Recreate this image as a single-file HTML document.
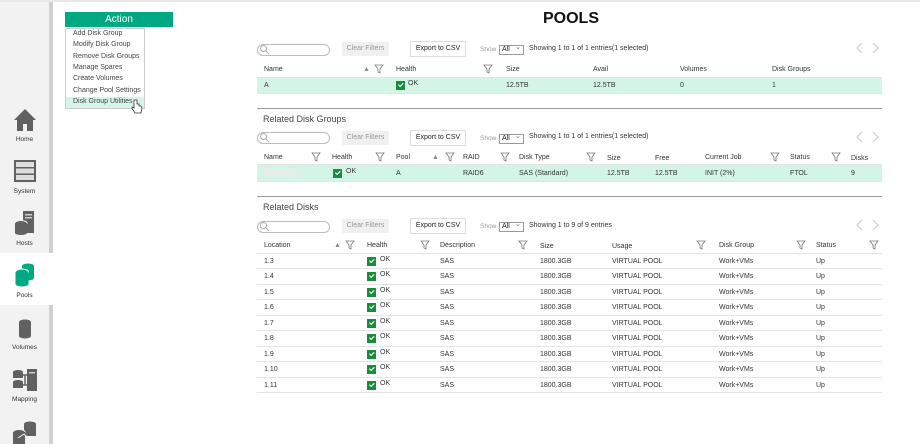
<!DOCTYPE html>
<html><head><meta charset="utf-8"><style>
*{margin:0;padding:0;box-sizing:border-box}
body{width:920px;height:444px;overflow:hidden;background:#fff;font-family:"Liberation Sans",sans-serif;color:#333;position:relative}
.a{position:absolute;white-space:nowrap}
.t{font-size:7px;line-height:8px}
.side{position:absolute;left:0;top:2px;width:49px;height:442px;background:#f2f2f2}
.bar{position:absolute;left:49px;top:2px;width:4px;height:442px;background:#d0d0d0}
.lbl{position:absolute;width:49px;text-align:center;font-size:6.5px;color:#333}
.mi{position:absolute;left:73px;font-size:7px;color:#444}
.sb{position:absolute;left:257px;width:73px;height:12px;border:1px solid #bbb;border-radius:6px}
.cf{position:absolute;left:342px;width:47px;height:14px;background:#f0f0f0;color:#999;font-size:7px;line-height:14px;text-align:center}
.ex{position:absolute;left:410px;width:56px;height:16px;border:1px solid #ddd;font-size:7px;line-height:14px;text-align:center;color:#222}
.sh{position:absolute;left:480px;font-size:6.5px;color:#999}
.sel{position:absolute;left:499px;width:25px;height:10px;border:1px solid #999;font-size:7px;line-height:8px;padding-left:2px;color:#222}
.sel:after{content:"⌄";position:absolute;right:2px;top:-2px;font-size:7px;color:#666}
.hr{position:absolute;left:257px;width:625px;height:1px;background:#e4e4e4}
.row{position:absolute;left:257px;width:625px;height:15px;background:#d3f5e6}
.sep{position:absolute;left:257px;width:625px;height:1px;background:#999}
.ok{position:absolute;width:9px;height:9px;background:#1b8c3c}
.ok:after{content:"";position:absolute;left:2px;top:1px;width:4px;height:2px;border-left:1.5px solid #fff;border-bottom:1.5px solid #fff;transform:rotate(-45deg);transform-origin:left top;top:4px}
.h2{position:absolute;left:263px;font-size:9px;color:#444}
</style></head><body>
<div class="a" style="left:0;top:0;width:920px;height:2px;background:#e8e8e8"></div>
<div class="side"></div><div class="bar"></div>
<div class="a" style="left:0;top:253px;width:53px;height:52px;background:#fff"></div>
<svg class="a" style="left:13px;top:108px" width="24" height="24" viewBox="0 0 24 24"><path d="M12 1L1 12h3v11h6v-7h4v7h6V12h3z" fill="#616161"/></svg>
<div class="lbl" style="top:136px">Home</div>
<svg class="a" style="left:13px;top:159px" width="24" height="24" viewBox="0 0 24 24"><rect x="1" y="1" width="22" height="22" fill="#616161"/><rect x="3" y="3" width="18" height="5" fill="#ddd"/><rect x="3" y="9.5" width="18" height="5" fill="#ddd"/><rect x="3" y="16" width="18" height="5" fill="#ddd"/></svg>
<div class="lbl" style="top:188px">System</div>
<svg class="a" style="left:15px;top:211px" width="20" height="24" viewBox="0 0 20 24"><rect x="8" y="0" width="11" height="22" fill="#616161"/><rect x="10" y="3" width="7" height="1.5" fill="#ccc"/><rect x="10" y="6" width="7" height="1.5" fill="#ccc"/><ellipse cx="6" cy="12" rx="6" ry="2.5" fill="#616161" stroke="#f2f2f2"/><rect x="0" y="12" width="12" height="10" fill="#616161"/><ellipse cx="6" cy="22" rx="6" ry="2" fill="#616161"/></svg>
<div class="lbl" style="top:240px">Hosts</div>
<svg class="a" style="left:15px;top:263px" width="20" height="24" viewBox="0 0 20 24"><ellipse cx="13" cy="3" rx="6" ry="2.5" fill="#01a982"/><rect x="7" y="3" width="12" height="12" fill="#01a982"/><ellipse cx="13" cy="15" rx="6" ry="2.5" fill="#01a982"/><ellipse cx="7" cy="9" rx="6.5" ry="3" fill="#01a982" stroke="#fff"/><rect x="0.5" y="9" width="13" height="12" fill="#01a982"/><ellipse cx="7" cy="21" rx="6.5" ry="2.5" fill="#01a982"/></svg>
<div class="lbl" style="top:292px">Pools</div>
<svg class="a" style="left:18px;top:319px" width="14" height="20" viewBox="0 0 14 20"><ellipse cx="7" cy="3" rx="6" ry="2.5" fill="#616161"/><rect x="1" y="3" width="12" height="14" fill="#616161"/><ellipse cx="7" cy="17" rx="6" ry="2.5" fill="#616161"/></svg>
<div class="lbl" style="top:344px">Volumes</div>
<svg class="a" style="left:12px;top:368px" width="26" height="24" viewBox="0 0 26 24"><ellipse cx="6" cy="4" rx="5" ry="2" fill="#616161"/><rect x="1" y="4" width="10" height="6" fill="#616161"/><ellipse cx="6" cy="14" rx="5" ry="2" fill="#616161"/><rect x="1" y="14" width="10" height="6" fill="#616161"/><path d="M11 7h4M11 17h4M13 7v10" stroke="#616161" stroke-width="1.5"/><rect x="15" y="1" width="10" height="22" fill="#616161"/><rect x="17" y="4" width="6" height="1.5" fill="#ccc"/></svg>
<div class="lbl" style="top:396px">Mapping</div>
<svg class="a" style="left:12px;top:420px" width="26" height="24" viewBox="0 0 26 24"><ellipse cx="18" cy="4" rx="6" ry="2.5" fill="#616161"/><rect x="12" y="4" width="12" height="12" fill="#616161"/><ellipse cx="7" cy="12" rx="6" ry="2.5" fill="#616161" stroke="#f2f2f2"/><rect x="1" y="12" width="12" height="12" fill="#616161"/><path d="M6 18l6-4 4 4" stroke="#f2f2f2" fill="none"/></svg>
<div class="a" style="left:65px;top:12px;width:108px;height:15px;background:#01a982;color:#fff;font-size:10px;line-height:15px;text-align:center">Action</div>
<div class="a" style="left:65px;top:28px;width:80px;height:81px;border:1px solid #ccc;background:#fff"></div>
<div class="a" style="left:66px;top:97px;width:78px;height:11px;background:#d4f5ea"></div>
<div class="mi" style="top:30px">Add Disk Group</div>
<div class="mi" style="top:41px">Modify Disk Group</div>
<div class="mi" style="top:53px">Remove Disk Groups</div>
<div class="mi" style="top:64px">Manage Spares</div>
<div class="mi" style="top:75px">Create Volumes</div>
<div class="mi" style="top:87px">Change Pool Settings</div>
<div class="mi" style="top:98px">Disk Group Utilities</div>
<svg class="a" style="left:131px;top:99px" width="12" height="15" viewBox="0 0 12 15"><path d="M3 1v8L1.5 8 1 9.5 4 14h6l1-5-1-2-2 0V5L6 5V1z" fill="#fff" stroke="#333" stroke-width=".8"/></svg>
<div class="a" style="left:521px;top:10px;width:100px;text-align:center;font-size:16px;font-weight:bold;color:#111">POOLS</div>

<div class="sb" style="top:44px"></div>
<div class="cf" style="top:42px">Clear Filters</div>
<div class="ex" style="top:41px">Export to CSV</div>
<div class="sh" style="top:46px">Show</div><div class="sel" style="top:45px">All</div>
<div class="a t" style="left:529px;top:45px">Showing 1 to 1 of 1 entries(1 selected)</div>
<div class="a t" style="left:264px;top:66px">Name</div>
<div class="a t" style="left:363px;top:66px;color:#888">&#9650;</div>
<div class="a t" style="left:396px;top:66px">Health</div>
<div class="a t" style="left:506px;top:66px">Size</div>
<div class="a t" style="left:593px;top:66px">Avail</div>
<div class="a t" style="left:680px;top:66px">Volumes</div>
<div class="a t" style="left:772px;top:66px">Disk Groups</div>
<div class="hr" style="top:77px"></div>
<div class="row" style="top:78px"></div>
<div class="a t" style="left:264px;top:82px">A</div>
<div class="ok" style="left:396px;top:81px"></div><div class="a t" style="left:408px;top:80px">OK</div>
<div class="a t" style="left:506px;top:82px">12.5TB</div>
<div class="a t" style="left:593px;top:82px">12.5TB</div>
<div class="a t" style="left:680px;top:82px">0</div>
<div class="a t" style="left:772px;top:82px">1</div>
<div class="hr" style="top:93px"></div>
<div class="sep" style="top:108px"></div>

<div class="h2" style="top:114px">Related Disk Groups</div>
<div class="sb" style="top:132px"></div>
<div class="cf" style="top:131px">Clear Filters</div>
<div class="ex" style="top:130px">Export to CSV</div>
<div class="sh" style="top:135px">Show</div><div class="sel" style="top:134px">All</div>
<div class="a t" style="left:529px;top:133px">Showing 1 to 1 of 1 entries(1 selected)</div>
<div class="a t" style="left:264px;top:154px">Name</div>
<div class="a t" style="left:332px;top:154px">Health</div>
<div class="a t" style="left:396px;top:154px">Pool</div>
<div class="a t" style="left:432px;top:154px;color:#888">&#9650;</div>
<div class="a t" style="left:463px;top:154px">RAID</div>
<div class="a t" style="left:519px;top:154px">Disk Type</div>
<div class="a t" style="left:607px;top:155px">Size</div>
<div class="a t" style="left:655px;top:155px">Free</div>
<div class="a t" style="left:705px;top:154px">Current Job</div>
<div class="a t" style="left:790px;top:154px">Status</div>
<div class="a t" style="left:851px;top:155px">Disks</div>
<div class="hr" style="top:164px"></div>
<div class="row" style="top:165px;height:16px"></div>
<div class="a" style="left:262px;top:170px;width:40px;height:6px;background:#e5ece9;filter:blur(1px)"></div>
<div class="ok" style="left:333px;top:169px"></div><div class="a t" style="left:346px;top:168px">OK</div>
<div class="a t" style="left:396px;top:170px">A</div>
<div class="a t" style="left:463px;top:170px">RAID6</div>
<div class="a t" style="left:519px;top:170px">SAS (Standard)</div>
<div class="a t" style="left:607px;top:170px">12.5TB</div>
<div class="a t" style="left:655px;top:170px">12.5TB</div>
<div class="a t" style="left:705px;top:170px">INIT (2%)</div>
<div class="a t" style="left:790px;top:170px">FTOL</div>
<div class="a t" style="left:851px;top:170px">9</div>
<div class="hr" style="top:181px"></div>
<div class="sep" style="top:196px"></div>

<div class="h2" style="top:202px">Related Disks</div>
<div class="sb" style="top:221px"></div>
<div class="cf" style="top:219px">Clear Filters</div>
<div class="ex" style="top:218px">Export to CSV</div>
<div class="sh" style="top:223px">Show</div><div class="sel" style="top:222px">All</div>
<div class="a t" style="left:529px;top:222px">Showing 1 to 9 of 9 entries</div>
<div class="a t" style="left:264px;top:242px">Location</div>
<div class="a t" style="left:334px;top:242px;color:#888">&#9650;</div>
<div class="a t" style="left:367px;top:242px">Health</div>
<div class="a t" style="left:440px;top:242px">Description</div>
<div class="a t" style="left:540px;top:243px">Size</div>
<div class="a t" style="left:612px;top:243px">Usage</div>
<div class="a t" style="left:719px;top:242px">Disk Group</div>
<div class="a t" style="left:816px;top:242px">Status</div>
<div class="hr" style="top:253px"></div>

<div class="a t" style="left:264px;top:258px">1.3</div><div class="ok" style="left:367px;top:257px"></div><div class="a t" style="left:380px;top:256px">OK</div><div class="a t" style="left:440px;top:258px">SAS</div><div class="a t" style="left:540px;top:258px">1800.3GB</div><div class="a t" style="left:612px;top:258px">VIRTUAL POOL</div><div class="a t" style="left:719px;top:258px">Work+VMs</div><div class="a t" style="left:816px;top:258px">Up</div>
<div class="hr" style="top:268px"></div>
<div class="a t" style="left:264px;top:273px">1.4</div><div class="ok" style="left:367px;top:272px"></div><div class="a t" style="left:380px;top:271px">OK</div><div class="a t" style="left:440px;top:273px">SAS</div><div class="a t" style="left:540px;top:273px">1800.3GB</div><div class="a t" style="left:612px;top:273px">VIRTUAL POOL</div><div class="a t" style="left:719px;top:273px">Work+VMs</div><div class="a t" style="left:816px;top:273px">Up</div>
<div class="hr" style="top:284px"></div>
<div class="a t" style="left:264px;top:289px">1.5</div><div class="ok" style="left:367px;top:288px"></div><div class="a t" style="left:380px;top:287px">OK</div><div class="a t" style="left:440px;top:289px">SAS</div><div class="a t" style="left:540px;top:289px">1800.3GB</div><div class="a t" style="left:612px;top:289px">VIRTUAL POOL</div><div class="a t" style="left:719px;top:289px">Work+VMs</div><div class="a t" style="left:816px;top:289px">Up</div>
<div class="hr" style="top:299px"></div>
<div class="a t" style="left:264px;top:304px">1.6</div><div class="ok" style="left:367px;top:303px"></div><div class="a t" style="left:380px;top:302px">OK</div><div class="a t" style="left:440px;top:304px">SAS</div><div class="a t" style="left:540px;top:304px">1800.3GB</div><div class="a t" style="left:612px;top:304px">VIRTUAL POOL</div><div class="a t" style="left:719px;top:304px">Work+VMs</div><div class="a t" style="left:816px;top:304px">Up</div>
<div class="hr" style="top:315px"></div>
<div class="a t" style="left:264px;top:320px">1.7</div><div class="ok" style="left:367px;top:319px"></div><div class="a t" style="left:380px;top:318px">OK</div><div class="a t" style="left:440px;top:320px">SAS</div><div class="a t" style="left:540px;top:320px">1800.3GB</div><div class="a t" style="left:612px;top:320px">VIRTUAL POOL</div><div class="a t" style="left:719px;top:320px">Work+VMs</div><div class="a t" style="left:816px;top:320px">Up</div>
<div class="hr" style="top:330px"></div>
<div class="a t" style="left:264px;top:335px">1.8</div><div class="ok" style="left:367px;top:334px"></div><div class="a t" style="left:380px;top:333px">OK</div><div class="a t" style="left:440px;top:335px">SAS</div><div class="a t" style="left:540px;top:335px">1800.3GB</div><div class="a t" style="left:612px;top:335px">VIRTUAL POOL</div><div class="a t" style="left:719px;top:335px">Work+VMs</div><div class="a t" style="left:816px;top:335px">Up</div>
<div class="hr" style="top:346px"></div>
<div class="a t" style="left:264px;top:351px">1.9</div><div class="ok" style="left:367px;top:350px"></div><div class="a t" style="left:380px;top:349px">OK</div><div class="a t" style="left:440px;top:351px">SAS</div><div class="a t" style="left:540px;top:351px">1800.3GB</div><div class="a t" style="left:612px;top:351px">VIRTUAL POOL</div><div class="a t" style="left:719px;top:351px">Work+VMs</div><div class="a t" style="left:816px;top:351px">Up</div>
<div class="hr" style="top:361px"></div>
<div class="a t" style="left:264px;top:366px">1.10</div><div class="ok" style="left:367px;top:365px"></div><div class="a t" style="left:380px;top:364px">OK</div><div class="a t" style="left:440px;top:366px">SAS</div><div class="a t" style="left:540px;top:366px">1800.3GB</div><div class="a t" style="left:612px;top:366px">VIRTUAL POOL</div><div class="a t" style="left:719px;top:366px">Work+VMs</div><div class="a t" style="left:816px;top:366px">Up</div>
<div class="hr" style="top:377px"></div>
<div class="a t" style="left:264px;top:382px">1.11</div><div class="ok" style="left:367px;top:381px"></div><div class="a t" style="left:380px;top:380px">OK</div><div class="a t" style="left:440px;top:382px">SAS</div><div class="a t" style="left:540px;top:382px">1800.3GB</div><div class="a t" style="left:612px;top:382px">VIRTUAL POOL</div><div class="a t" style="left:719px;top:382px">Work+VMs</div><div class="a t" style="left:816px;top:382px">Up</div>
<div class="hr" style="top:392px"></div>

<svg width="920" height="444" class="a" style="left:0;top:0;pointer-events:none">
<defs>
<path id="fn" d="M0 0h8L5 4v4L3 7V4z" fill="none" stroke="#777" stroke-width=".8"/>
<g id="mg" fill="none" stroke="#aaa" stroke-width="1"><circle cx="3.5" cy="3.5" r="3"/><path d="M5.7 5.7L9 9"/></g>
<g id="ar" fill="none" stroke="#ccc" stroke-width="1.2"><path d="M5 0L0 5l5 5"/><path d="M16 0l5 5-5 5"/></g>
</defs>
<use href="#mg" x="260" y="45"/><use href="#mg" x="260" y="133"/><use href="#mg" x="260" y="222"/>
<use href="#ar" x="857" y="43"/><use href="#ar" x="857" y="132"/><use href="#ar" x="857" y="220"/>
<use href="#fn" x="375" y="65"/><use href="#fn" x="484" y="65"/>
<use href="#fn" x="312" y="153"/><use href="#fn" x="376" y="153"/><use href="#fn" x="446" y="153"/><use href="#fn" x="501" y="153"/><use href="#fn" x="587" y="153"/><use href="#fn" x="771" y="153"/><use href="#fn" x="832" y="153"/>
<use href="#fn" x="346" y="241"/><use href="#fn" x="421" y="241"/><use href="#fn" x="519" y="241"/><use href="#fn" x="697" y="241"/><use href="#fn" x="797" y="241"/><use href="#fn" x="870" y="241"/>
</svg>
</body></html>
